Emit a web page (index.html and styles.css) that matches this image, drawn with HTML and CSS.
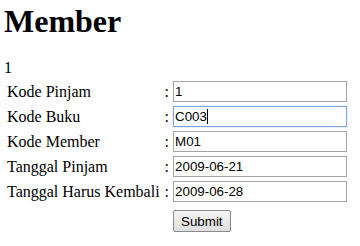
FILE: index.html
```html
<!DOCTYPE html>
<html lang="en">
<head>
    <meta charset="UTF-8">
    <title>Member</title>
    <link rel="stylesheet" href="styles.css">
</head>
<body>

    <h1>Member</h1>
    <div class="nomor">1</div>

    <!-- form peminjaman -->
    <form>
        <table class="form-table">
            <tr>
                <td>Kode Pinjam</td>
                <td>:</td>
                <td><input type="text" class="field" value="1"></td>
            </tr>
            <tr>
                <td>Kode Buku</td>
                <td>:</td>
                <td>
                    <div class="field-wrap">
                        <input type="text" class="field field-focus" value="C003">
                        <span class="caret"></span>
                    </div>
                </td>
            </tr>
            <tr>
                <td>Kode Member</td>
                <td>:</td>
                <td><input type="text" class="field" value="M01"></td>
            </tr>
            <tr>
                <td>Tanggal Pinjam</td>
                <td>:</td>
                <td><input type="text" class="field" value="2009-06-21"></td>
            </tr>
            <tr>
                <td>Tanggal Harus Kembali</td>
                <td>:</td>
                <td><input type="text" class="field" value="2009-06-28"></td>
            </tr>
            <tr>
                <td></td>
                <td></td>
                <td><button type="button" class="submit">Submit</button></td>
            </tr>
        </table>
    </form>

</body>
</html>
```

FILE: styles.css
```css
body {
    font-family: "Liberation Serif", "Times New Roman", serif;
    font-size: 16px;
    color: #000;
    background-color: #fff;
    margin: 0 4px;
}
h1 {
    font-size: 32px;
    font-weight: bold;
    margin: 3px 0 19px 0;
    line-height: 37px;
}
.nomor {
    line-height: 18px;
}
form {
    margin: 0;
}
.form-table {
    border-spacing: 2px;
    margin-top: 1px;
}
.form-table td {
    padding: 1px;
    vertical-align: middle;
    white-space: nowrap;
}
.form-table td:nth-child(2) {
    padding-left: 2px;
}
.field-wrap {
    position: relative;
}
.field {
    box-sizing: border-box;
    width: 174px;
    height: 21px;
    margin: 0;
    padding: 1px 1px;
    border: 1px solid #a5a5a5;
    font-family: "Liberation Sans", Arial, sans-serif;
    font-size: 13.33px;
    color: #000;
    outline: none;
    display: block;
}
.field-focus {
    border-color: #7ea4e6;
    box-shadow: 0 0 2px #b9cff5;
}
.caret {
    position: absolute;
    left: 34px;
    top: 3px;
    width: 1px;
    height: 15px;
    background-color: #000;
}
.submit {
    margin-top: 4px;
    height: 22px;
    padding: 0 7px;
    border: 1px solid #8a8a8a;
    border-radius: 2px;
    background: linear-gradient(#f4f4f4, #dedede);
    font-family: "Liberation Sans", Arial, sans-serif;
    font-size: 13.33px;
    color: #000;
}
```
